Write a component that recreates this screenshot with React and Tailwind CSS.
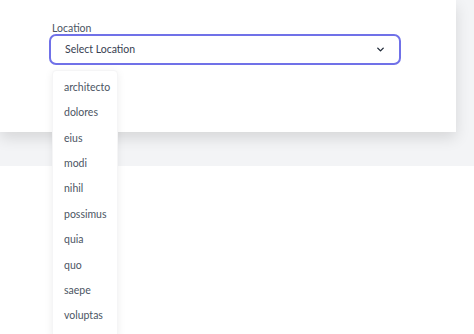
import { ChevronDown } from 'lucide-react';

const locations = ['architecto', 'dolores', 'eius', 'modi', 'nihil', 'possimus', 'quia', 'quo', 'saepe', 'voluptas'];

export default function App() {
    return (
        <div className="min-h-screen bg-white overflow-hidden" style={{ fontFamily: 'Lato, "Open Sans", sans-serif' }}>
            <div className="h-[166px] bg-[#f3f4f6]">
                <div className="relative w-[456px] h-[132px] bg-white shadow-[0_6px_14px_rgba(0,0,0,0.12)] pl-[49px] pt-[22px]">
                    <label className="block pl-[3px] text-[10.5px] leading-[12px] text-[#4b5563]">Location</label>
                    <div className="relative w-[352px]">
                        <button className="flex w-full h-[31px] items-center justify-between rounded-[7px] border-2 border-[#7071e8] bg-white pl-[14px] pr-[13px] text-[10.5px] text-[#374151]">
                            <span>Select Location</span>
                            <ChevronDown className="w-[11px] h-[11px] text-[#1f2937]" strokeWidth={3} />
                        </button>

                        {/* Options list */}
                        <ul className="absolute left-[3px] top-[36px] z-10 w-[66px] bg-white border border-[#f5f5f6] rounded-sm shadow-[0_2px_8px_rgba(0,0,0,0.07)] pt-[4px] pb-2">
                            {locations.map((loc) => (
                                <li key={loc} className="h-[25.4px] flex items-center pl-[11px] text-[10.5px] text-[#4b5563]">
                                    {loc}
                                </li>
                            ))}
                        </ul>
                    </div>
                </div>
            </div>
        </div>
    );
}
